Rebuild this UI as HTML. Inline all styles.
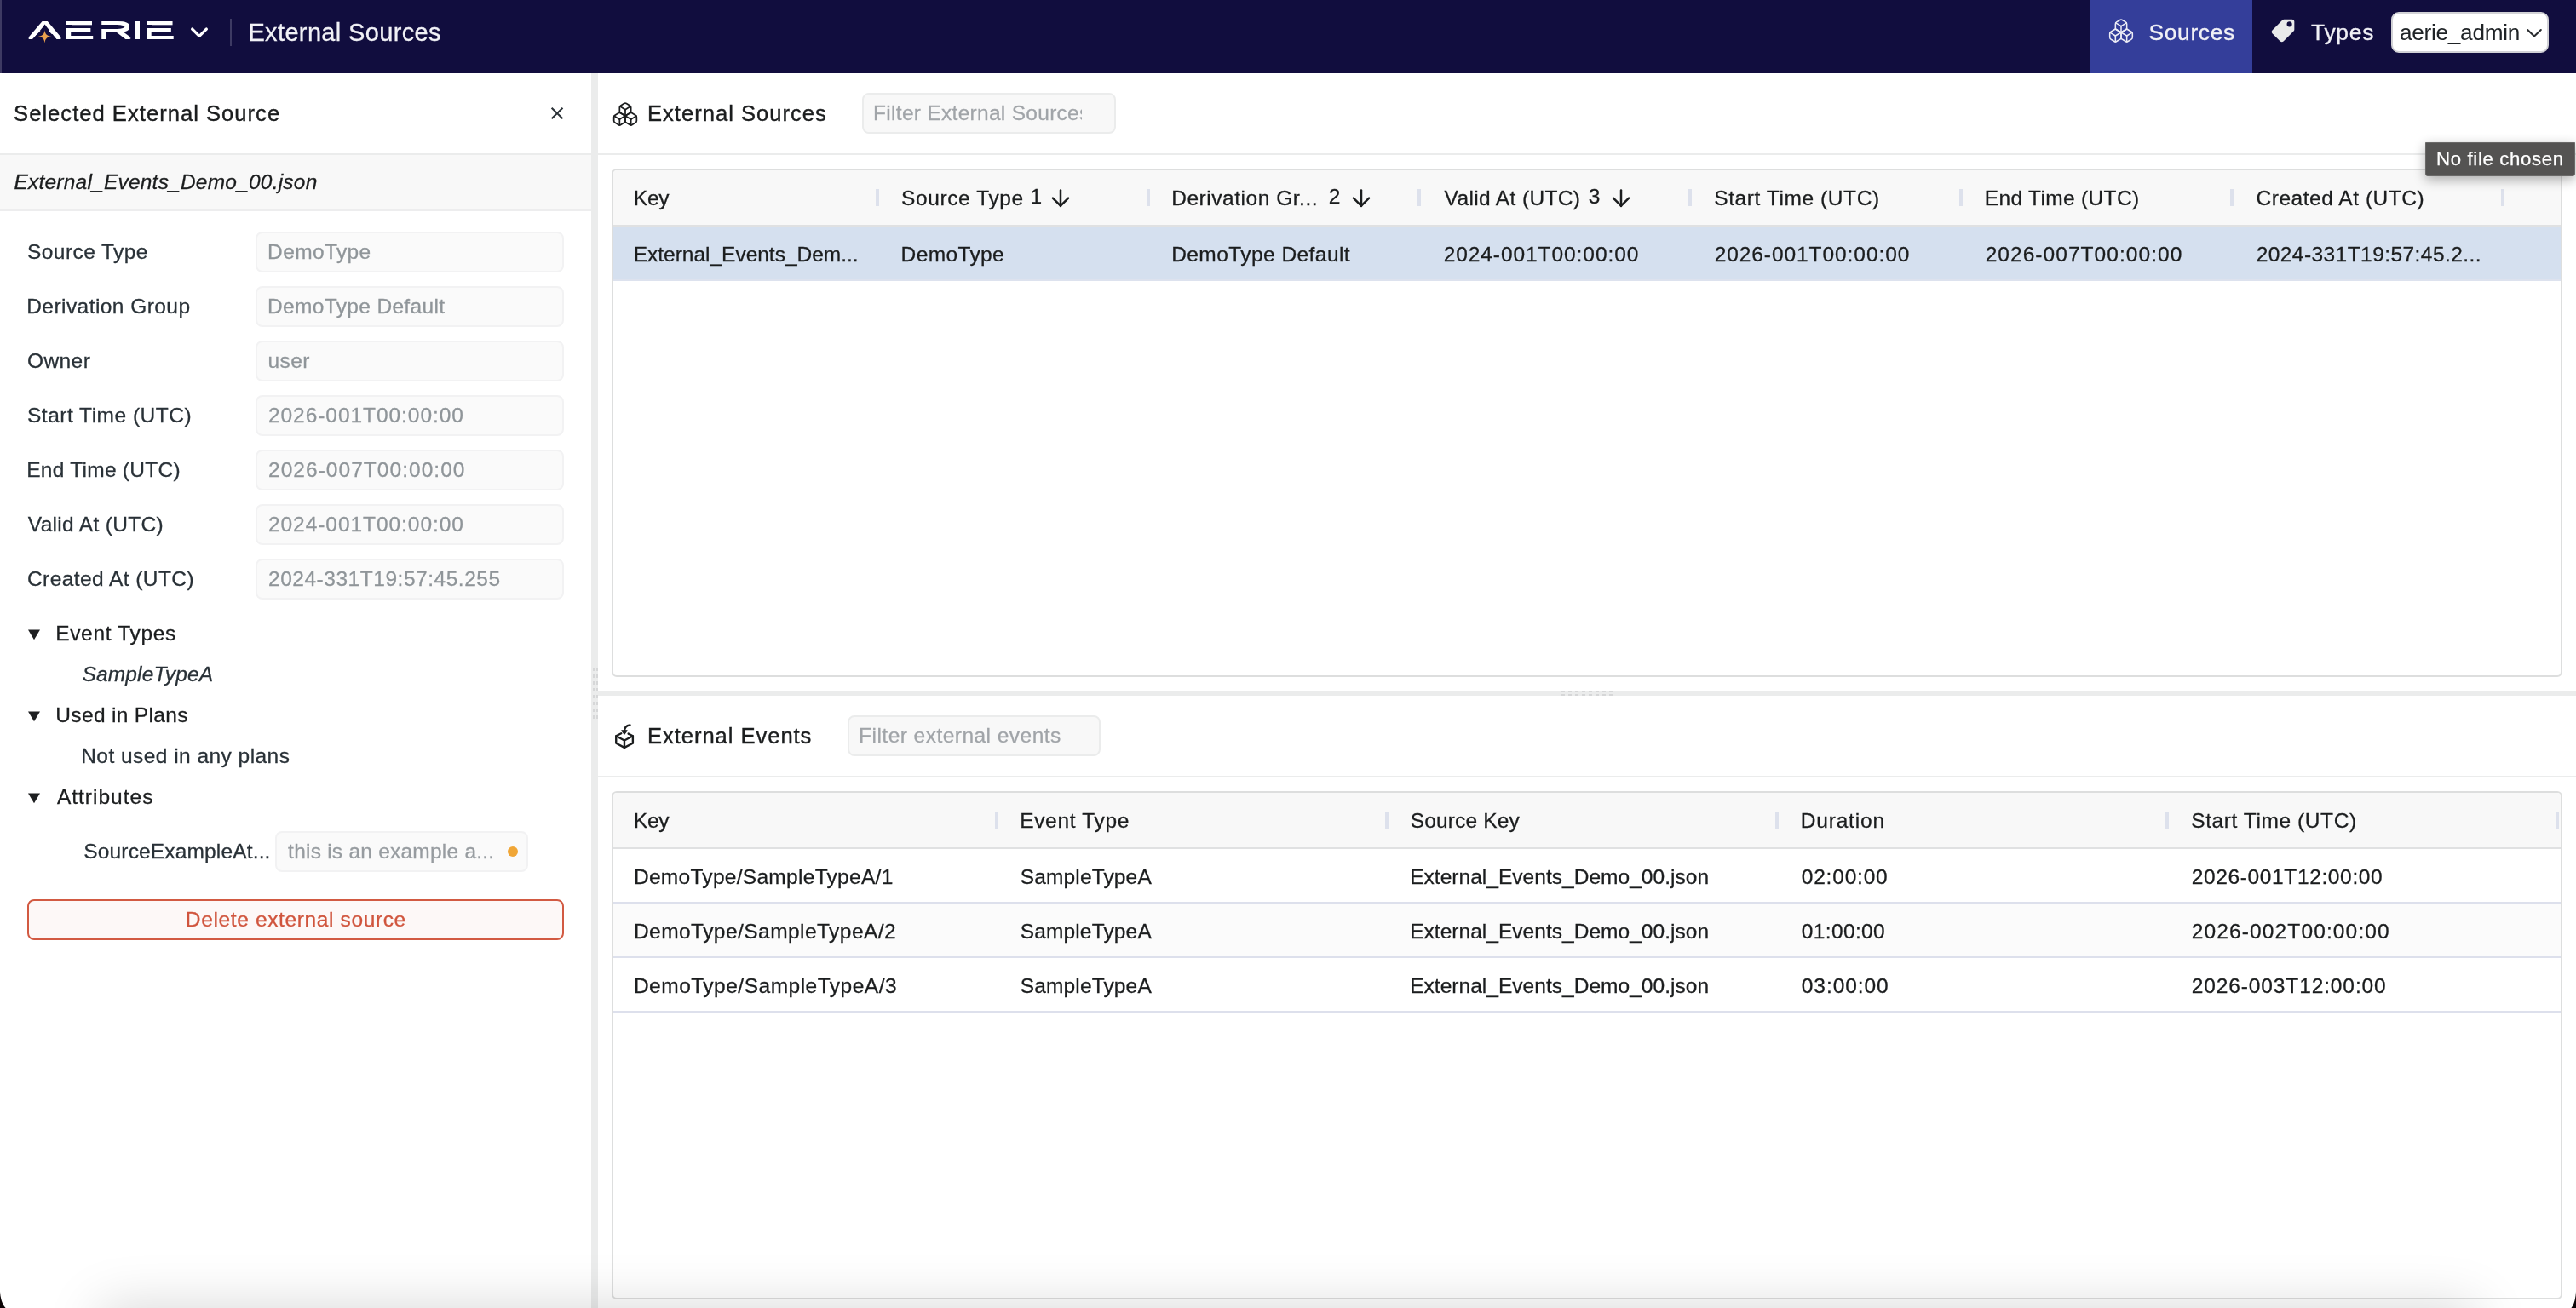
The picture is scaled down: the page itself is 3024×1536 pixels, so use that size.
<!DOCTYPE html>
<html lang="en"><head><meta charset="utf-8"><title>External Sources</title>
<style>
*{box-sizing:border-box;margin:0;padding:0}
html,body{width:3024px;height:1536px;overflow:hidden;background:#fff}
body{font-family:"Liberation Sans",sans-serif;position:relative;color:#1b1d1e}
.t{position:absolute;white-space:nowrap;line-height:1;display:block}
#app{position:absolute;left:0;top:0;width:3024px;height:1536px;overflow:hidden;will-change:transform}
.ic{position:absolute;display:block;overflow:visible}
.abs{position:absolute}
.nav{position:absolute;left:0;top:0;width:3024px;height:86px;background:#110d3e}
.tab{position:absolute;left:2454px;top:0;width:190px;height:86px;background:#343e9a}
.sel{position:absolute;left:2807px;top:14px;width:185px;height:48px;background:#fff;border:2px solid #d2d2d6;border-radius:9px}
.panel-h{position:absolute;height:96px;background:#fff;border-bottom:2px solid #ebecec}
.sub{position:absolute;left:0;top:182px;width:694px;height:66px;background:#f8f8f8;border-bottom:2px solid #ededee}
.inp{position:absolute;background:#f8f8f8;border:2px solid #ebecec;border-radius:8px}
.inp.dis{background:#fafafa;border-color:#f2f2f3}
.gut{position:absolute;background:#ebecec}
.dot{position:absolute;background:#d6d7d8}
.grid{position:absolute;border:2px solid #dddede;border-radius:6px;background:#fff;overflow:hidden}
.gh{position:absolute;left:0;right:0;top:0;height:66px;background:#f8f8f8;border-bottom:2px solid #e0e1e2}
.sep{position:absolute;width:4px;height:20px;background:#dde1ec}
.row{position:absolute;left:0;right:0;height:64px;border-bottom:2px solid #dde0ec}
.btn{position:absolute;left:32px;top:1056px;width:630px;height:48px;border:2px solid #d25a42;border-radius:8px;background:#fdf8f7}
.tip{position:absolute;left:2847px;top:167px;width:176px;height:40px;background:#545352;box-shadow:0 4px 14px rgba(0,0,0,.32);border:1px solid #6a6968;border-radius:0 0 3px 3px}
</style></head><body><div id="app">
<header class="nav">
<div class="abs" style="left:0;top:0;width:2px;height:86px;background:#3e3a63"></div>
<svg class="ic" style="left:30px;top:18px" width="184" height="40" viewBox="0 0 184 40"><title>AERIE</title><defs><filter id="lf" x="-5%" y="-20%" width="110%" height="140%"><feMorphology operator="dilate" radius="0 0.9"/></filter></defs><text filter="url(#lf)" transform="scale(2.1 1)" x="1.57 20.48 40.24 58.71 65.48" y="26.6" font-family="Liberation Sans, sans-serif" font-size="27.6" fill="#fff">AERIE</text><path d="M22.2 13.0 L36.9 28.6 H7.5z M46.6 11h7.4v4h-7.4z M87.6 11h8.2v5h-8.2z M140.6 11h8.2v4h-8.2z" fill="#110d3e"/><path d="M22.5 17.2c.5 4.6 2.2 6.9 7.9 7.6-5.7.7-7.4 3-7.9 8.1-.5-5.1-2.2-7.4-7.8-8.1 5.6-.7 7.3-3 7.8-7.6z" fill="#e9a04e"/></svg>
<svg class="ic" style="left:222px;top:30px" width="24" height="16" viewBox="0 0 24 16" fill="none" stroke="#fff" stroke-width="3.2" stroke-linecap="round" stroke-linejoin="round"><path d="M3.6 4 12 12.3 20.4 4"/></svg>
<div class="abs" style="left:270px;top:22px;width:2px;height:32px;background:#3d3a63"></div>
<div class="tab"></div>
<svg class="ic" style="left:2474.3px;top:20.4px" width="32" height="32" viewBox="0 0 24 24" fill="none" stroke="#ececf5" stroke-width="1.15" stroke-linecap="round" stroke-linejoin="round"><path d="M2.97 12.92A2 2 0 0 0 2 14.63v3.24a2 2 0 0 0 .97 1.71l3 1.8a2 2 0 0 0 2.06 0L12 19v-5.5l-5-3-4.03 2.42Z"/><path d="m7 16.5-4.74-2.85"/><path d="m7 16.5 5-3"/><path d="M7 16.5v5.17"/><path d="M12 13.5V19l3.97 2.38a2 2 0 0 0 2.06 0l3-1.8a2 2 0 0 0 .97-1.71v-3.24a2 2 0 0 0-.97-1.71L17 10.5l-5 3Z"/><path d="m17 16.5-5-3"/><path d="m17 16.5 4.74-2.85"/><path d="M17 16.5v5.17"/><path d="M7.97 4.42A2 2 0 0 0 7 6.13v4.37l5 3 5-3V6.13a2 2 0 0 0-.97-1.71l-3-1.8a2 2 0 0 0-2.06 0l-3 1.8Z"/><path d="M12 8 7.26 5.15"/><path d="m12 8 4.74-2.85"/><path d="M12 13.5V8"/></svg>
<svg class="ic" style="left:2664px;top:20px" width="32" height="32" viewBox="0 0 24 24"><path fill="#e9eaea" fill-rule="evenodd" d="M21.4 11.6l-9-9C12.1 2.2 11.6 2 11 2H4c-1.1 0-2 .9-2 2v7c0 .6.2 1.1.6 1.4l9 9c.4.4.9.6 1.4.6s1-.2 1.4-.6l7-7c.4-.4.6-.9.6-1.4s-.2-1-.6-1.4zM6.300000000000001 8.6a2.3 2.3 0 1 1 0-4.6 2.3 2.3 0 0 1 0 4.6z" transform="rotate(90 12 12)"/></svg>
<div class="sel"></div>
<svg class="ic" style="left:2964px;top:31px" width="22" height="16" viewBox="0 0 22 16" fill="none" stroke="#2a2d30" stroke-width="2.1" stroke-linecap="round" stroke-linejoin="round"><path d="M3.2 4 11 11.6 18.8 4"/></svg>
<span class="t" style="left:291.43px;top:24px;font-size:29px;color:#f1f1f6;letter-spacing:0.356px;-webkit-text-stroke:0.28px #f1f1f6;">External Sources</span>
<span class="t" style="left:2522.58px;top:25px;font-size:26.4px;color:#f1f1f6;letter-spacing:0.622px;-webkit-text-stroke:0.3px #f1f1f6;">Sources</span>
<span class="t" style="left:2712.99px;top:25px;font-size:26.4px;color:#f1f1f6;letter-spacing:0.734px;-webkit-text-stroke:0.3px #f1f1f6;">Types</span>
<span class="t" style="left:2816.88px;top:25px;font-size:26.2px;color:#1f2326;letter-spacing:-0.260px;">aerie_admin</span>
</header>
<aside>
<div class="panel-h" style="left:0;top:86px;width:694px"></div>
<svg class="ic" style="left:644px;top:123px" width="20" height="20" viewBox="0 0 20 20" stroke="#2b3237" stroke-width="2.1" stroke-linecap="butt"><path d="M3.6 3.7 16.5 16.3M16.5 3.7 3.6 16.3"/></svg>
<div class="sub"></div>
<div class="inp dis" style="left:300px;top:272px;width:362px;height:48px"></div>
<div class="inp dis" style="left:300px;top:336px;width:362px;height:48px"></div>
<div class="inp dis" style="left:300px;top:400px;width:362px;height:48px"></div>
<div class="inp dis" style="left:300px;top:464px;width:362px;height:48px"></div>
<div class="inp dis" style="left:300px;top:528px;width:362px;height:48px"></div>
<div class="inp dis" style="left:300px;top:592px;width:362px;height:48px"></div>
<div class="inp dis" style="left:300px;top:656px;width:362px;height:48px"></div>
<svg class="ic" style="left:33px;top:738.5px" width="14" height="13" viewBox="0 0 14 13"><path d="M0 0.4h14L7 12.3z" fill="#1e1f21"/></svg>
<svg class="ic" style="left:33px;top:834.5px" width="14" height="13" viewBox="0 0 14 13"><path d="M0 0.4h14L7 12.3z" fill="#1e1f21"/></svg>
<svg class="ic" style="left:33px;top:930.5px" width="14" height="13" viewBox="0 0 14 13"><path d="M0 0.4h14L7 12.3z" fill="#1e1f21"/></svg>
<div class="inp dis" style="left:323px;top:976px;width:297px;height:48px"></div>
<div class="abs" style="left:596px;top:994px;width:12px;height:12px;border-radius:50%;background:#f0a636"></div>
<div class="btn"></div>
<span class="t" style="left:16.05px;top:121px;font-size:25.6px;color:#1b1d1e;letter-spacing:1.012px;-webkit-text-stroke:0.4px #1b1d1e;">Selected External Source</span>
<span class="t" style="left:16.47px;top:202px;font-size:24.5px;color:#1b1d1e;letter-spacing:0.215px;font-style:italic;-webkit-text-stroke:0.28px #1b1d1e;">External_Events_Demo_00.json</span>
<span class="t" style="left:31.99px;top:284px;font-size:24.5px;color:#293137;letter-spacing:0.433px;-webkit-text-stroke:0.28px #293137;">Source Type</span>
<span class="t" style="left:314.09px;top:284px;font-size:24.5px;color:#8f9599;letter-spacing:0.376px;-webkit-text-stroke:0.28px #8f9599;">DemoType</span>
<span class="t" style="left:31.20px;top:348px;font-size:24.5px;color:#293137;letter-spacing:0.443px;-webkit-text-stroke:0.28px #293137;">Derivation Group</span>
<span class="t" style="left:314.09px;top:348px;font-size:24.5px;color:#8f9599;letter-spacing:0.336px;-webkit-text-stroke:0.28px #8f9599;">DemoType Default</span>
<span class="t" style="left:31.98px;top:412px;font-size:24.5px;color:#293137;letter-spacing:0.419px;-webkit-text-stroke:0.28px #293137;">Owner</span>
<span class="t" style="left:314.58px;top:412px;font-size:24.5px;color:#8f9599;letter-spacing:0.393px;-webkit-text-stroke:0.28px #8f9599;">user</span>
<span class="t" style="left:31.99px;top:476px;font-size:24.5px;color:#293137;letter-spacing:0.498px;-webkit-text-stroke:0.28px #293137;">Start Time (UTC)</span>
<span class="t" style="left:314.99px;top:476px;font-size:24.5px;color:#8f9599;letter-spacing:0.944px;-webkit-text-stroke:0.28px #8f9599;">2026-001T00:00:00</span>
<span class="t" style="left:31.20px;top:540px;font-size:24.5px;color:#293137;letter-spacing:0.262px;-webkit-text-stroke:0.28px #293137;">End Time (UTC)</span>
<span class="t" style="left:314.99px;top:540px;font-size:24.5px;color:#8f9599;letter-spacing:1.039px;-webkit-text-stroke:0.28px #8f9599;">2026-007T00:00:00</span>
<span class="t" style="left:32.80px;top:604px;font-size:24.5px;color:#293137;letter-spacing:0.317px;-webkit-text-stroke:0.28px #293137;">Valid At (UTC)</span>
<span class="t" style="left:314.99px;top:604px;font-size:24.5px;color:#8f9599;letter-spacing:0.944px;-webkit-text-stroke:0.28px #8f9599;">2024-001T00:00:00</span>
<span class="t" style="left:31.91px;top:668px;font-size:24.5px;color:#293137;letter-spacing:0.434px;-webkit-text-stroke:0.28px #293137;">Created At (UTC)</span>
<span class="t" style="left:314.99px;top:668px;font-size:24.5px;color:#8f9599;letter-spacing:0.529px;-webkit-text-stroke:0.28px #8f9599;">2024-331T19:57:45.255</span>
<span class="t" style="left:65.17px;top:732px;font-size:24.5px;color:#1b1d1e;letter-spacing:0.682px;-webkit-text-stroke:0.28px #1b1d1e;">Event Types</span>
<span class="t" style="left:96.43px;top:780px;font-size:24.5px;color:#293137;letter-spacing:0.171px;font-style:italic;-webkit-text-stroke:0.28px #293137;">SampleTypeA</span>
<span class="t" style="left:65.34px;top:828px;font-size:24.5px;color:#1b1d1e;letter-spacing:0.330px;-webkit-text-stroke:0.28px #1b1d1e;">Used in Plans</span>
<span class="t" style="left:95.20px;top:876px;font-size:24.5px;color:#293137;letter-spacing:0.457px;-webkit-text-stroke:0.28px #293137;">Not used in any plans</span>
<span class="t" style="left:66.90px;top:924px;font-size:24.5px;color:#1b1d1e;letter-spacing:1.008px;-webkit-text-stroke:0.28px #1b1d1e;">Attributes</span>
<span class="t" style="left:98.30px;top:988px;font-size:24.5px;color:#293137;letter-spacing:0.154px;-webkit-text-stroke:0.28px #293137;">SourceExampleAt...</span>
<span class="t" style="left:338.12px;top:988px;font-size:24.5px;color:#979ca0;letter-spacing:0.231px;-webkit-text-stroke:0.28px #979ca0;">this is an example a...</span>
<span class="t" style="left:217.86px;top:1068px;font-size:24.5px;color:#d0553d;letter-spacing:0.629px;-webkit-text-stroke:0.3px #d0553d;">Delete external source</span>
</aside>
<div class="gut" style="left:694px;top:86px;width:8px;height:1450px"></div>
<div class="gut" style="left:702px;top:811px;width:2322px;height:6px"></div>
<div class="dot" style="left:696px;top:784px;width:2px;height:4px"></div><div class="dot" style="left:700px;top:784px;width:2px;height:4px"></div>
<div class="dot" style="left:696px;top:792px;width:2px;height:4px"></div><div class="dot" style="left:700px;top:792px;width:2px;height:4px"></div>
<div class="dot" style="left:696px;top:800px;width:2px;height:4px"></div><div class="dot" style="left:700px;top:800px;width:2px;height:4px"></div>
<div class="dot" style="left:696px;top:808px;width:2px;height:4px"></div><div class="dot" style="left:700px;top:808px;width:2px;height:4px"></div>
<div class="dot" style="left:696px;top:816px;width:2px;height:4px"></div><div class="dot" style="left:700px;top:816px;width:2px;height:4px"></div>
<div class="dot" style="left:696px;top:824px;width:2px;height:4px"></div><div class="dot" style="left:700px;top:824px;width:2px;height:4px"></div>
<div class="dot" style="left:696px;top:832px;width:2px;height:4px"></div><div class="dot" style="left:700px;top:832px;width:2px;height:4px"></div>
<div class="dot" style="left:696px;top:840px;width:2px;height:4px"></div><div class="dot" style="left:700px;top:840px;width:2px;height:4px"></div>
<div class="dot" style="left:1833px;top:811px;width:4px;height:2px"></div><div class="dot" style="left:1833px;top:815px;width:4px;height:2px"></div>
<div class="dot" style="left:1841px;top:811px;width:4px;height:2px"></div><div class="dot" style="left:1841px;top:815px;width:4px;height:2px"></div>
<div class="dot" style="left:1849px;top:811px;width:4px;height:2px"></div><div class="dot" style="left:1849px;top:815px;width:4px;height:2px"></div>
<div class="dot" style="left:1857px;top:811px;width:4px;height:2px"></div><div class="dot" style="left:1857px;top:815px;width:4px;height:2px"></div>
<div class="dot" style="left:1865px;top:811px;width:4px;height:2px"></div><div class="dot" style="left:1865px;top:815px;width:4px;height:2px"></div>
<div class="dot" style="left:1873px;top:811px;width:4px;height:2px"></div><div class="dot" style="left:1873px;top:815px;width:4px;height:2px"></div>
<div class="dot" style="left:1881px;top:811px;width:4px;height:2px"></div><div class="dot" style="left:1881px;top:815px;width:4px;height:2px"></div>
<div class="dot" style="left:1889px;top:811px;width:4px;height:2px"></div><div class="dot" style="left:1889px;top:815px;width:4px;height:2px"></div>
<section>
<div class="panel-h" style="left:702px;top:86px;width:2322px"></div>
<svg class="ic" style="left:718px;top:117.5px" width="32" height="32" viewBox="0 0 24 24" fill="none" stroke="#1b1d1e" stroke-width="1.3" stroke-linecap="round" stroke-linejoin="round"><path d="M2.97 12.92A2 2 0 0 0 2 14.63v3.24a2 2 0 0 0 .97 1.71l3 1.8a2 2 0 0 0 2.06 0L12 19v-5.5l-5-3-4.03 2.42Z"/><path d="m7 16.5-4.74-2.85"/><path d="m7 16.5 5-3"/><path d="M7 16.5v5.17"/><path d="M12 13.5V19l3.97 2.38a2 2 0 0 0 2.06 0l3-1.8a2 2 0 0 0 .97-1.71v-3.24a2 2 0 0 0-.97-1.71L17 10.5l-5 3Z"/><path d="m17 16.5-5-3"/><path d="m17 16.5 4.74-2.85"/><path d="M17 16.5v5.17"/><path d="M7.97 4.42A2 2 0 0 0 7 6.13v4.37l5 3 5-3V6.13a2 2 0 0 0-.97-1.71l-3-1.8a2 2 0 0 0-2.06 0l-3 1.8Z"/><path d="M12 8 7.26 5.15"/><path d="m12 8 4.74-2.85"/><path d="M12 13.5V8"/></svg>
<div class="inp" style="left:1012px;top:109px;width:298px;height:48px"></div>
<div class="grid" style="left:718px;top:198px;width:2290px;height:597px"><div class="gh"></div><div class="abs" style="left:0;right:0;top:66px;height:64px;background:#d5e0ef;border-bottom:2px solid #dde2ee"></div></div>
<div class="sep" style="left:1028px;top:222px"></div>
<div class="sep" style="left:1346px;top:222px"></div>
<div class="sep" style="left:1664px;top:222px"></div>
<div class="sep" style="left:1982px;top:222px"></div>
<div class="sep" style="left:2300px;top:222px"></div>
<div class="sep" style="left:2618px;top:222px"></div>
<div class="sep" style="left:2936px;top:222px"></div>
<svg class="ic" style="left:1232.8px;top:221.8px" width="24" height="22" viewBox="0 0 24 22" fill="none" stroke="#1b1d1e" stroke-width="2.5" stroke-linecap="round" stroke-linejoin="round"><path d="M12 1.4v18.6"/><path d="M2.9 10.6 12 19.7l9.1-9.1"/></svg>
<svg class="ic" style="left:1586.2px;top:221.8px" width="24" height="22" viewBox="0 0 24 22" fill="none" stroke="#1b1d1e" stroke-width="2.5" stroke-linecap="round" stroke-linejoin="round"><path d="M12 1.4v18.6"/><path d="M2.9 10.6 12 19.7l9.1-9.1"/></svg>
<svg class="ic" style="left:1891.2px;top:221.8px" width="24" height="22" viewBox="0 0 24 22" fill="none" stroke="#1b1d1e" stroke-width="2.5" stroke-linecap="round" stroke-linejoin="round"><path d="M12 1.4v18.6"/><path d="M2.9 10.6 12 19.7l9.1-9.1"/></svg>
<div class="tip"></div>
<span class="t" style="left:760.00px;top:121px;font-size:25.6px;color:#1b1d1e;letter-spacing:1.000px;-webkit-text-stroke:0.4px #1b1d1e;">External Sources</span>
<span class="t" style="left:1025.12px;top:121px;font-size:24.5px;color:#a0a4a8;letter-spacing:0.289px;-webkit-text-stroke:0.28px #a0a4a8;width:245px;overflow:hidden;">Filter External Sources</span>
<span class="t" style="left:743.77px;top:221px;font-size:24.5px;color:#1b1d1e;letter-spacing:-0.196px;-webkit-text-stroke:0.28px #1b1d1e;">Key</span>
<span class="t" style="left:1058.09px;top:221px;font-size:24.5px;color:#1b1d1e;letter-spacing:0.603px;-webkit-text-stroke:0.28px #1b1d1e;">Source Type</span>
<span class="t" style="left:1209.55px;top:219px;font-size:24.5px;color:#1b1d1e;letter-spacing:-4.850px;-webkit-text-stroke:0.28px #1b1d1e;">1</span>
<span class="t" style="left:1375.17px;top:221px;font-size:24.5px;color:#1b1d1e;letter-spacing:0.536px;-webkit-text-stroke:0.28px #1b1d1e;">Derivation Gr...</span>
<span class="t" style="left:1559.64px;top:219px;font-size:24.5px;color:#1b1d1e;letter-spacing:-0.500px;-webkit-text-stroke:0.28px #1b1d1e;">2</span>
<span class="t" style="left:1695.58px;top:221px;font-size:24.5px;color:#1b1d1e;letter-spacing:0.361px;-webkit-text-stroke:0.28px #1b1d1e;">Valid At (UTC)</span>
<span class="t" style="left:1864.70px;top:219px;font-size:24.5px;color:#1b1d1e;letter-spacing:-0.500px;-webkit-text-stroke:0.28px #1b1d1e;">3</span>
<span class="t" style="left:2012.29px;top:221px;font-size:24.5px;color:#1b1d1e;letter-spacing:0.579px;-webkit-text-stroke:0.28px #1b1d1e;">Start Time (UTC)</span>
<span class="t" style="left:2329.80px;top:221px;font-size:24.5px;color:#1b1d1e;letter-spacing:0.333px;-webkit-text-stroke:0.28px #1b1d1e;">End Time (UTC)</span>
<span class="t" style="left:2648.48px;top:221px;font-size:24.5px;color:#1b1d1e;letter-spacing:0.533px;-webkit-text-stroke:0.28px #1b1d1e;">Created At (UTC)</span>
<span class="t" style="left:743.76px;top:287px;font-size:24.5px;color:#1b1d1e;letter-spacing:-0.017px;-webkit-text-stroke:0.28px #1b1d1e;">External_Events_Dem...</span>
<span class="t" style="left:1057.58px;top:287px;font-size:24.5px;color:#1b1d1e;letter-spacing:0.367px;-webkit-text-stroke:0.28px #1b1d1e;">DemoType</span>
<span class="t" style="left:1375.17px;top:287px;font-size:24.5px;color:#1b1d1e;letter-spacing:0.440px;-webkit-text-stroke:0.28px #1b1d1e;">DemoType Default</span>
<span class="t" style="left:1694.64px;top:287px;font-size:24.5px;color:#1b1d1e;letter-spacing:0.930px;-webkit-text-stroke:0.28px #1b1d1e;">2024-001T00:00:00</span>
<span class="t" style="left:2012.64px;top:287px;font-size:24.5px;color:#1b1d1e;letter-spacing:0.930px;-webkit-text-stroke:0.28px #1b1d1e;">2026-001T00:00:00</span>
<span class="t" style="left:2330.64px;top:287px;font-size:24.5px;color:#1b1d1e;letter-spacing:1.055px;-webkit-text-stroke:0.28px #1b1d1e;">2026-007T00:00:00</span>
<span class="t" style="left:2648.64px;top:287px;font-size:24.5px;color:#1b1d1e;letter-spacing:0.439px;-webkit-text-stroke:0.28px #1b1d1e;">2024-331T19:57:45.2...</span>
<span class="t" style="left:2860.04px;top:176px;font-size:22.2px;color:#ffffff;letter-spacing:0.653px;-webkit-text-stroke:0.25px #ffffff;">No file chosen</span>
</section>
<section>
<div class="panel-h" style="left:702px;top:817px;width:2322px"></div>
<svg class="ic" style="left:718.1px;top:847.1px" width="31.8" height="33.7" viewBox="0 0 34 36" fill="none" stroke="#1b1d1e" stroke-width="2.55" stroke-linejoin="round" stroke-linecap="round"><path d="M12 15.2 5.6 18.5v9L16 33l10.6-5.5v-9L21 15.6"/><path d="M5.6 18.5 16 24l10.6-5.5M16 24v9"/><path d="M23 4.8c-4.5.3-7 3-7 8.2"/><path d="M12.6 11.6h6.8L16 16.2z" fill="#1b1d1e" stroke-width="1.2"/></svg>
<div class="inp" style="left:995px;top:840px;width:297px;height:48px"></div>
<div class="grid" style="left:718px;top:929px;width:2290px;height:597px"><div class="gh"></div><div class="row" style="top:66px"></div><div class="row" style="top:130px;background:#fbfbfb"></div><div class="row" style="top:194px"></div></div>
<div class="sep" style="left:1168px;top:953px"></div>
<div class="sep" style="left:1626px;top:953px"></div>
<div class="sep" style="left:2084px;top:953px"></div>
<div class="sep" style="left:2542px;top:953px"></div>
<div class="sep" style="left:3000px;top:953px"></div>
<span class="t" style="left:760.00px;top:852px;font-size:25.6px;color:#1b1d1e;letter-spacing:0.940px;-webkit-text-stroke:0.4px #1b1d1e;">External Events</span>
<span class="t" style="left:1008.12px;top:852px;font-size:24.5px;color:#a0a4a8;letter-spacing:0.465px;-webkit-text-stroke:0.28px #a0a4a8;">Filter external events</span>
<span class="t" style="left:743.76px;top:952px;font-size:24.5px;color:#1b1d1e;letter-spacing:-0.198px;-webkit-text-stroke:0.28px #1b1d1e;">Key</span>
<span class="t" style="left:1197.17px;top:952px;font-size:24.5px;color:#1b1d1e;letter-spacing:0.688px;-webkit-text-stroke:0.28px #1b1d1e;">Event Type</span>
<span class="t" style="left:1655.68px;top:952px;font-size:24.5px;color:#1b1d1e;letter-spacing:0.154px;-webkit-text-stroke:0.28px #1b1d1e;">Source Key</span>
<span class="t" style="left:2113.78px;top:952px;font-size:24.5px;color:#1b1d1e;letter-spacing:0.807px;-webkit-text-stroke:0.28px #1b1d1e;">Duration</span>
<span class="t" style="left:2572.29px;top:952px;font-size:24.5px;color:#1b1d1e;letter-spacing:0.580px;-webkit-text-stroke:0.28px #1b1d1e;">Start Time (UTC)</span>
<span class="t" style="left:743.92px;top:1018px;font-size:24.5px;color:#1b1d1e;letter-spacing:0.293px;-webkit-text-stroke:0.28px #1b1d1e;">DemoType/SampleTypeA/1</span>
<span class="t" style="left:1197.68px;top:1018px;font-size:24.5px;color:#1b1d1e;letter-spacing:0.153px;-webkit-text-stroke:0.28px #1b1d1e;">SampleTypeA</span>
<span class="t" style="left:1655.17px;top:1018px;font-size:24.5px;color:#1b1d1e;letter-spacing:0.032px;-webkit-text-stroke:0.28px #1b1d1e;">External_Events_Demo_00.json</span>
<span class="t" style="left:2114.78px;top:1018px;font-size:24.5px;color:#1b1d1e;letter-spacing:0.798px;-webkit-text-stroke:0.28px #1b1d1e;">02:00:00</span>
<span class="t" style="left:2572.63px;top:1018px;font-size:24.5px;color:#1b1d1e;letter-spacing:0.639px;-webkit-text-stroke:0.28px #1b1d1e;">2026-001T12:00:00</span>
<span class="t" style="left:743.92px;top:1082px;font-size:24.5px;color:#1b1d1e;letter-spacing:0.453px;-webkit-text-stroke:0.28px #1b1d1e;">DemoType/SampleTypeA/2</span>
<span class="t" style="left:1197.67px;top:1082px;font-size:24.5px;color:#1b1d1e;letter-spacing:0.154px;-webkit-text-stroke:0.28px #1b1d1e;">SampleTypeA</span>
<span class="t" style="left:1655.17px;top:1082px;font-size:24.5px;color:#1b1d1e;letter-spacing:0.032px;-webkit-text-stroke:0.28px #1b1d1e;">External_Events_Demo_00.json</span>
<span class="t" style="left:2114.78px;top:1082px;font-size:24.5px;color:#1b1d1e;letter-spacing:0.369px;-webkit-text-stroke:0.28px #1b1d1e;">01:00:00</span>
<span class="t" style="left:2572.63px;top:1082px;font-size:24.5px;color:#1b1d1e;letter-spacing:1.139px;-webkit-text-stroke:0.28px #1b1d1e;">2026-002T00:00:00</span>
<span class="t" style="left:743.92px;top:1146px;font-size:24.5px;color:#1b1d1e;letter-spacing:0.499px;-webkit-text-stroke:0.28px #1b1d1e;">DemoType/SampleTypeA/3</span>
<span class="t" style="left:1197.68px;top:1146px;font-size:24.5px;color:#1b1d1e;letter-spacing:0.153px;-webkit-text-stroke:0.28px #1b1d1e;">SampleTypeA</span>
<span class="t" style="left:1655.17px;top:1146px;font-size:24.5px;color:#1b1d1e;letter-spacing:0.032px;-webkit-text-stroke:0.28px #1b1d1e;">External_Events_Demo_00.json</span>
<span class="t" style="left:2114.78px;top:1146px;font-size:24.5px;color:#1b1d1e;letter-spacing:0.940px;-webkit-text-stroke:0.28px #1b1d1e;">03:00:00</span>
<span class="t" style="left:2572.63px;top:1146px;font-size:24.5px;color:#1b1d1e;letter-spacing:0.889px;-webkit-text-stroke:0.28px #1b1d1e;">2026-003T12:00:00</span>
</section>
<div class="abs" style="left:130px;top:1548px;width:2764px;height:40px;box-shadow:0 0 64px 12px rgba(0,0,0,.17)"></div>
<svg class="ic" style="left:0;top:1516px" width="3024" height="20" viewBox="0 0 3024 20"><path d="M0 1C.6 10 3 16 6.600000000000001 20H0z" fill="#0c0506"/><path d="M3024 1c-.6 9-2.4 15-5.6 19h5.6z" fill="#0c0506"/></svg>
</div></body></html>
